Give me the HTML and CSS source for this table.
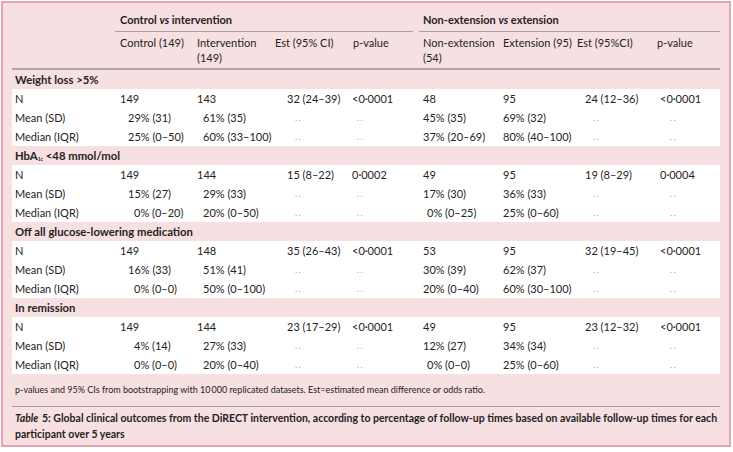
FILE: index.html
```html
<!DOCTYPE html>
<html lang="en">
<head>
<meta charset="utf-8">
<title>Table 5</title>
<link rel="stylesheet" href="styles.css">
</head>
<body>
<div class="panel">
  <div class="row grp-row">
    <div class="grp grp1">Control <i>vs</i> intervention</div>
    <div class="grp grp2">Non-extension <i>vs</i> extension</div>
  </div>
  <div class="row sub-row">
    <div></div>
    <div>Control (149)</div>
    <div>Intervention<br>(149)</div>
    <div>Est (95% CI)</div>
    <div>p-value</div>
    <div>Non-extension<br>(54)</div>
    <div>Extension (95)</div>
    <div>Est (95%CI)</div>
    <div>p-value</div>
  </div>

  <div class="section">Weight loss &gt;5%</div>
  <div class="band">
    <div class="row"><div class="lab">N</div><div>149</div><div>143</div><div class="est">32 (24–39)</div><div class="pv">&lt;0·0001</div><div>48</div><div>95</div><div class="est2">24 (12–36)</div><div class="pv2">&lt;0·0001</div></div>
    <div class="row"><div class="lab">Mean (SD)</div><div class="c1">29% (31)</div><div class="c2">61% (35)</div><div class="dots d3">..</div><div class="dots d4">..</div><div>45% (35)</div><div>69% (32)</div><div class="dots d7">..</div><div class="dots d8">..</div></div>
    <div class="row"><div class="lab">Median (IQR)</div><div class="c1">25% (0–50)</div><div class="c2">60% (33–100)</div><div class="dots d3">..</div><div class="dots d4">..</div><div>37% (20–69)</div><div>80% (40–100)</div><div class="dots d7">..</div><div class="dots d8">..</div></div>
  </div>

  <div class="section">HbA<sub>1c</sub> &lt;48 mmol/mol</div>
  <div class="band">
    <div class="row"><div class="lab">N</div><div>149</div><div>144</div><div class="est">15 (8–22)</div><div class="pv">0·0002</div><div>49</div><div>95</div><div class="est2">19 (8–29)</div><div class="pv2">0·0004</div></div>
    <div class="row"><div class="lab">Mean (SD)</div><div class="c1">15% (27)</div><div class="c2">29% (33)</div><div class="dots d3">..</div><div class="dots d4">..</div><div>17% (30)</div><div>36% (33)</div><div class="dots d7">..</div><div class="dots d8">..</div></div>
    <div class="row"><div class="lab">Median (IQR)</div><div class="c1s">0% (0–20)</div><div class="c2">20% (0–50)</div><div class="dots d3">..</div><div class="dots d4">..</div><div class="c5s">0% (0–25)</div><div>25% (0–60)</div><div class="dots d7">..</div><div class="dots d8">..</div></div>
  </div>

  <div class="section">Off all glucose-lowering medication</div>
  <div class="band">
    <div class="row"><div class="lab">N</div><div>149</div><div>148</div><div class="est">35 (26–43)</div><div class="pv">&lt;0·0001</div><div>53</div><div>95</div><div class="est2">32 (19–45)</div><div class="pv2">&lt;0·0001</div></div>
    <div class="row"><div class="lab">Mean (SD)</div><div class="c1">16% (33)</div><div class="c2">51% (41)</div><div class="dots d3">..</div><div class="dots d4">..</div><div>30% (39)</div><div>62% (37)</div><div class="dots d7">..</div><div class="dots d8">..</div></div>
    <div class="row"><div class="lab">Median (IQR)</div><div class="c1s">0% (0–0)</div><div class="c2">50% (0–100)</div><div class="dots d3">..</div><div class="dots d4">..</div><div>20% (0–40)</div><div>60% (30–100)</div><div class="dots d7">..</div><div class="dots d8">..</div></div>
  </div>

  <div class="section">In remission</div>
  <div class="band">
    <div class="row"><div class="lab">N</div><div>149</div><div>144</div><div class="est">23 (17–29)</div><div class="pv">&lt;0·0001</div><div>49</div><div>95</div><div class="est2">23 (12–32)</div><div class="pv2">&lt;0·0001</div></div>
    <div class="row"><div class="lab">Mean (SD)</div><div class="c1s">4% (14)</div><div class="c2">27% (33)</div><div class="dots d3">..</div><div class="dots d4">..</div><div>12% (27)</div><div>34% (34)</div><div class="dots d7">..</div><div class="dots d8">..</div></div>
    <div class="row"><div class="lab">Median (IQR)</div><div class="c1s">0% (0–0)</div><div class="c2">20% (0–40)</div><div class="dots d3">..</div><div class="dots d4">..</div><div class="c5s">0% (0–0)</div><div>25% (0–60)</div><div class="dots d7">..</div><div class="dots d8">..</div></div>
  </div>

  <p class="foot">p-values and 95% CIs from bootstrapping with 10&#8201;000 replicated datasets. Est=estimated mean difference or odds ratio.</p>
  <p class="caption"><span class="cline"><i>Table</i> 5: Global clinical outcomes from the DiRECT intervention, according to percentage of follow-up times based on available follow-up times for each</span><span class="cline">participant over 5 years</span></p>
</div>
</body>
</html>
```

FILE: styles.css
```css
html, body {
  margin: 0;
  padding: 0;
  background: #ffffff;
}

body {
  font-family: Lato, "Open Sans", "Liberation Sans", sans-serif;
  color: #262223;
  font-size: 11px;
}

.panel {
  margin: 1px 0 0 1px;
  border: 2px solid #e5a3b4;
  background: #f6e0e2;
  padding: 0 9px;
  width: 708px;
  height: 442px;
}

.row {
  display: grid;
  grid-template-columns: 108px 77px 78px 78px 70px 80px 74px 80px 63px;
  height: 19px;
  line-height: 19px;
  white-space: nowrap;
}

.grp-row {
  height: auto;
  padding-top: 9px;
  line-height: 15px;
}

.grp {
  font-weight: 700;
  border-bottom: 1px solid #aa9fa0;
  padding-bottom: 4px;
}

.grp1 {
  grid-column: 2 / 6;
  margin-left: -5px;
  padding-left: 5px;
  margin-right: 10px;
}

.grp2 {
  grid-column: 6 / 10;
  margin-left: -4px;
  padding-left: 4px;
}

.sub-row {
  height: auto;
  line-height: 15px;
  padding: 3px 0;
  border-bottom: 2px solid #b0a6a7;
}

.section {
  font-weight: 700;
  font-size: 11.3px;
  height: 19px;
  line-height: 19px;
  padding-left: 3px;
}

.section sub {
  font-size: 5px;
  vertical-align: -1px;
  line-height: 0;
}

.band {
  background: #ffffff;
}

.lab {
  padding-left: 3px;
}

.c1 { padding-left: 8px; }
.c1s { padding-left: 14px; }
.c2 { padding-left: 6px; }
.c5s { padding-left: 4px; }
.est { padding-left: 12px; }
.pv { margin-left: -1px; }
.est2 { padding-left: 8px; }
.pv2 { padding-left: 3px; }

.dots {
  color: #a6a0a1;
  font-size: 9px;
  letter-spacing: 1.5px;
}
.d3 { padding-left: 20px; }
.d4 { padding-left: 4px; }
.d7 { padding-left: 16px; }
.d8 { padding-left: 13px; }

.foot {
  margin: 0;
  padding: 9px 0 0 3px;
  height: 23px;
  line-height: 13px;
  font-size: 9px;
  border-bottom: 1px solid #aa9fa0;
}

.caption {
  margin: 0;
  padding: 3px 0 0 3px;
  font-weight: 700;
  font-size: 10.5px;
  line-height: 16px;
}

.cline {
  display: block;
  white-space: nowrap;
}

.caption i {
  margin-right: 1px;
}
```
